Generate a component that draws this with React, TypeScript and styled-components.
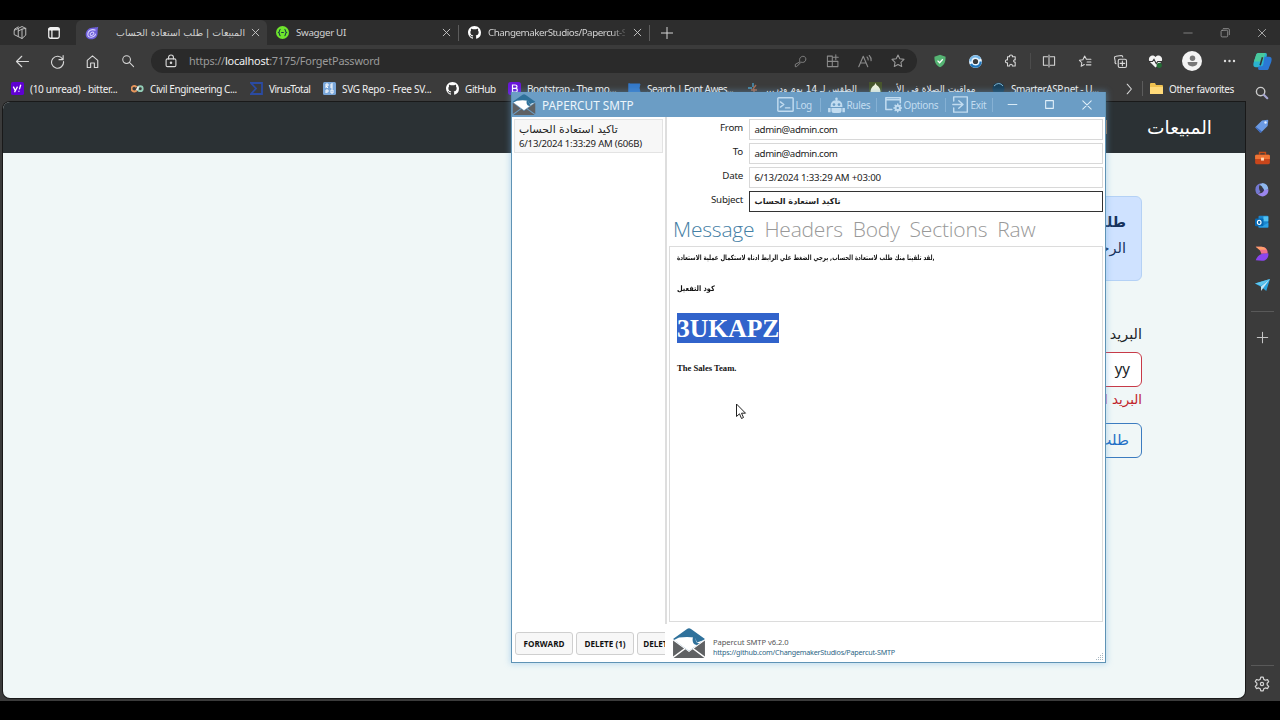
import React from "react";
import styled, { createGlobalStyle } from "styled-components";

const ui = `"Noto Sans", "Open Sans", "DejaVu Sans", sans-serif`;
const arabicUi = `"DejaVu Sans", "Noto Sans", sans-serif`;

const Global = createGlobalStyle`
  * { box-sizing: border-box; }
  html, body { margin: 0; background: #000; overflow: hidden; }
  body { font-family: ${ui}; }
`;

const Screen = styled.div`
  position: relative;
  width: 1280px;
  height: 720px;
  padding: 20px 0 19px;
  background: #000;
  overflow: hidden;
`;
const Browser = styled.div`
  display: flex;
  flex-direction: column;
  height: 681px;
  background: #3b3b3b;
  color: #e6e6e6;
`;
const TabBar = styled.div`
  display: flex;
  align-items: center;
  height: 25px;
  background: #2d2d2d;
  font-size: 10.4px;
`;
const Slot = styled.div<{ $w: number }>`
  display: flex;
  flex: none;
  align-items: center;
  justify-content: center;
  width: ${(p) => p.$w}px;
`;
const Tab = styled.div<{ $w: number; $active?: boolean }>`
  display: flex;
  flex: none;
  align-items: center;
  width: ${(p) => p.$w}px;
  height: 25px;
  padding: 0 6px 0 9px;
  gap: 7px;
  border-radius: 6px 6px 0 0;
  background: ${(p) => (p.$active ? "#3b3b3b" : "transparent")};
`;
const TabTitle = styled.div<{ $fade?: boolean; $rtl?: boolean }>`
  flex: 1;
  height: 16px;
  line-height: 15px;
  overflow: hidden;
  white-space: nowrap;
  font-family: ${(p) => (p.$rtl ? arabicUi : ui)};
  font-size: ${(p) => (p.$rtl ? 9.4 : 9.8)}px;
  letter-spacing: ${(p) => (p.$rtl ? 0 : p.$fade ? -0.47 : -0.33)}px;
  text-align: ${(p) => (p.$rtl ? "right" : "left")};
  margin-right: ${(p) => (p.$rtl ? -2 : 0)}px;
  color: #d2d2d2;
  mask-image: ${(p) => (p.$fade ? "linear-gradient(to right, #000 90%, rgba(0, 0, 0, 0.2))" : "none")};
`;
const Rule = styled.div<{ $h?: number; $c?: string }>`
  flex: none;
  width: 1px;
  height: ${(p) => p.$h ?? 16}px;
  background: ${(p) => p.$c ?? "#5c5c5c"};
`;
const Spacer = styled.div`
  flex: 1;
`;
const Toolbar = styled.div`
  display: flex;
  align-items: center;
  height: 32px;
  padding-left: 4px;
`;
const Address = styled.div`
  display: flex;
  flex: none;
  align-items: center;
  width: 766px;
  height: 24px;
  margin-left: 6px;
  padding: 0 4px 0 11px;
  border-radius: 12px;
  background: #2a2a2a;
  color: #9b9b9b;
  font-size: 10.9px;
  line-height: 16px;
`;
const Url = styled.div`
  flex: 1;
  padding-left: 9px;
  letter-spacing: -0.2px;
  b { color: #f2f2f2; font-weight: 400; }
`;
const Avatar = styled.div`
  display: flex;
  align-items: center;
  justify-content: center;
  width: 20px;
  height: 20px;
  border-radius: 50%;
  background: #f3f3f3;
`;
const Bookmarks = styled.div`
  display: flex;
  align-items: center;
  height: 25px;
  padding: 0 0 2px 11px;
`;
const Bookmark = styled.div<{ $w: number; $ls?: number }>`
  display: flex;
  flex: none;
  align-items: center;
  gap: 6px;
  width: ${(p) => p.$w}px;
  font-size: 10px;
  line-height: 14px;
  letter-spacing: ${(p) => p.$ls ?? -0.4}px;
  white-space: nowrap;
  color: #f0f0f0;
  svg { flex: none; }
`;
const BookmarkArabic = styled.span`
  font-family: ${arabicUi};
  font-size: 9px;
  letter-spacing: 0;
`;
const Lower = styled.div`
  display: flex;
  flex: 1;
  min-height: 0;
`;
const Main = styled.div`
  display: flex;
  flex-direction: column;
  width: 1246px;
  padding-bottom: 3px;
`;
const Page = styled.div`
  flex: 1;
  margin: 0 1px 0 3px;
  overflow: hidden;
  border-radius: 7px 0 7px 7px;
  background: #f0f7f7;
  box-shadow: 0 0 0 1px #191919;
  font-family: ${arabicUi};
  direction: rtl;
`;
const PageHeader = styled.div`
  display: flex;
  align-items: center;
  height: 51px;
  padding-right: 33px;
  background: #2b3134;
  color: #fff;
  font-size: 18.6px;
  line-height: 28px;
  gap: 39px;
`;
const NavLink = styled.span`
  color: #b5b8ba;
`;
const Form = styled.div`
  display: flex;
  flex-direction: column;
  width: 560px;
  margin-right: 103px;
  padding-top: 43px;
  color: #212529;
`;
const Alert = styled.div`
  height: 85px;
  padding: 12px 15px;
  border: 1px solid #b4d1f5;
  border-radius: 6px;
  background: #cfe2ff;
  color: #17325c;
  font-size: 14.5px;
  line-height: 26px;
`;
const AlertTitle = styled.div`
  font-size: 14px;
  font-weight: 700;
`;
const FieldLabel = styled.div`
  margin-top: 42px;
  height: 29px;
  line-height: 22px;
  font-size: 14.4px;
`;
const Input = styled.div`
  height: 35px;
  padding: 0 11px;
  border: 1px solid #c73a48;
  border-radius: 6px;
  background: #fff;
  font: 15px/31px ${ui};
`;
const ErrorText = styled.div`
  height: 36px;
  padding-top: 1px;
  line-height: 24px;
  font-size: 13.4px;
  color: #c01f2c;
`;
const SubmitButton = styled.div`
  width: 110px;
  height: 35px;
  padding: 0 12px;
  border: 1px solid #3c7cc0;
  border-radius: 6px;
  font-size: 15px;
  line-height: 32px;
  color: #1f6fc5;
`;
const Side = styled.div`
  display: flex;
  flex-direction: column;
  align-items: center;
  width: 32px;
`;
const SideItem = styled.div<{ $h?: number }>`
  display: flex;
  flex: none;
  align-items: center;
  justify-content: center;
  height: ${(p) => p.$h ?? 32}px;
`;
const SideRule = styled.div`
  flex: none;
  width: 23px;
  height: 1px;
  background: #595959;
`;

/* Papercut desktop window, floating over the browser */
const Win = styled.div`
  position: absolute;
  left: 511px;
  top: 92px;
  display: flex;
  flex-direction: column;
  width: 595px;
  height: 571px;
  border: 1px solid #5f93b5;
  border-top: 0;
  background: #fff;
  color: #222;
  box-shadow: 0 0 6px 1px rgba(110, 175, 225, 0.4);
`;
const TitleBar = styled.div`
  display: flex;
  flex: none;
  align-items: center;
  height: 25px;
  background: #6b9dc5;
  color: #c2dcf0;
`;
const AppTitle = styled.div`
  flex: 1;
  padding-left: 6px;
  font-size: 11.8px;
  line-height: 18px;
  color: #ecf5fb;
`;
const Command = styled.div<{ $w: number }>`
  display: flex;
  flex: none;
  align-items: center;
  gap: 1.5px;
  width: ${(p) => p.$w}px;
  font-size: 10px;
  line-height: 14px;
  letter-spacing: -0.35px;
  svg { flex: none; }
`;
const Panes = styled.div`
  display: flex;
  flex: 1;
  min-height: 0;
`;
const ListPane = styled.div`
  display: flex;
  flex-direction: column;
  width: 153px;
  padding: 2px 2px 0 2px;
`;
const MailItem = styled.div`
  height: 34px;
  padding: 3px 4px;
  border: 1px solid #e3e3e3;
  background: #f7f7f7;
  font-size: 9.6px;
  line-height: 14px;
  letter-spacing: -0.22px;
  white-space: nowrap;
`;
const MailSubject = styled.div`
  font: 10.9px/14px ${arabicUi};
  letter-spacing: 0;
`;
const ListButtons = styled.div`
  display: flex;
  gap: 3px;
  height: 30px;
  margin: auto -2px 0 1px;
  overflow: hidden;
`;
const PushButton = styled.div`
  display: flex;
  flex: none;
  align-items: center;
  justify-content: center;
  width: 58px;
  height: 23px;
  border: 1px solid #cfcfcf;
  border-radius: 3px;
  background: #f7f7f7;
  font: 700 8.1px/12px "Open Sans", sans-serif;
  color: #111;
  white-space: nowrap;
`;
const Splitter = styled.div`
  width: 2px;
  height: 507px;
  background: #dedede;
`;
const MailPane = styled.div`
  display: flex;
  flex: 1;
  flex-direction: column;
  padding: 2px 2px 0 2px;
`;
const Field = styled.div`
  display: flex;
  height: 24px;
  font-size: 9.8px;
`;
const FieldName = styled.div`
  width: 75px;
  padding-right: 1px;
  line-height: 18px;
  letter-spacing: -0.25px;
  text-align: right;
`;
const FieldValue = styled.div<{ $focus?: boolean; $ls?: number }>`
  flex: 1;
  height: 21px;
  margin-left: 5px;
  padding-left: 4.5px;
  border: 1px solid ${(p) => (p.$focus ? "#333" : "#d8d8d8")};
  font-family: ${(p) => (p.$focus ? arabicUi : ui)};
  font-weight: ${(p) => (p.$focus ? 700 : 400)};
  font-size: ${(p) => (p.$focus ? 8.1 : 9.7)}px;
  letter-spacing: ${(p) => p.$ls ?? 0}px;
  line-height: 19px;
`;
const ViewTabs = styled.div`
  display: flex;
  gap: 10px;
  height: 31px;
  padding-left: 4px;
  font-family: "Open Sans", "Noto Sans", sans-serif;
  font-size: 21px;
  font-weight: 300;
  letter-spacing: -0.2px;
  line-height: 29px;
  color: #999;
`;
const ViewTab = styled.div<{ $on?: boolean }>`
  color: ${(p) => (p.$on ? "#4580a5" : "inherit")};
`;
const Message = styled.div`
  height: 376px;
  padding: 4px 7px;
  border: 1px solid #dcdcdc;
  color: #111;
  font-family: "Liberation Serif", "DejaVu Sans", serif;
`;
const MessageArabic = styled.div<{ $size: number; $gap: number; $squeeze: number }>`
  width: max-content;
  height: 14px;
  margin-bottom: ${(p) => p.$gap}px;
  font: 700 ${(p) => p.$size}px/14px ${arabicUi};
  white-space: nowrap;
  transform: scaleX(${(p) => p.$squeeze});
  transform-origin: left center;
`;
const Code = styled.span`
  display: inline-block;
  height: 30px;
  background: #3163cb;
  color: #fff;
  font-size: 25.6px;
  font-weight: 700;
  line-height: 31px;
`;
const Signature = styled.div`
  margin-top: 18px;
  font-size: 8.6px;
  font-weight: 700;
  line-height: 14px;
`;
const AppFooter = styled.div`
  display: flex;
  gap: 7px;
  padding: 6px 0 0 3px;
`;
const About = styled.div`
  padding-top: 9px;
  font-size: 7.6px;
  line-height: 10px;
  letter-spacing: -0.05px;
  color: #555;
`;
const Link = styled.div`
  font-size: 7.2px;
  letter-spacing: -0.21px;
  color: #2d6685;
`;
const Grip = styled.svg`
  position: absolute;
  right: 1px;
  bottom: 1px;
`;
const Cursor = styled.svg`
  position: absolute;
  left: 735px;
  top: 403px;
`;

type IconProps = { s?: number; c?: string; w?: number; children: React.ReactNode };
const Line = ({ s = 15, c = "#d8d8d8", w = 1.5, children }: IconProps) => (
  <svg width={s} height={s} viewBox="0 0 20 20" fill="none" stroke={c} strokeWidth={w} strokeLinecap="round" strokeLinejoin="round">
    {children}
  </svg>
);
const Close = ({ s = 11, c = "#cfcfcf" }) => (
  <Line s={s} c={c} w={1.6}><path d="M4 4l12 12M16 4L4 16" /></Line>
);
const GitHubMark = ({ s = 13 }) => (
  <svg width={s} height={s} viewBox="0 0 16 16" fill="#fff">
    <path d="M8 0C3.58 0 0 3.58 0 8c0 3.54 2.29 6.53 5.47 7.59.4.07.55-.17.55-.38 0-.19-.01-.82-.01-1.49-2.01.37-2.53-.49-2.69-.94-.09-.23-.48-.94-.82-1.13-.28-.15-.68-.52-.01-.53.63-.01 1.08.58 1.23.82.72 1.21 1.87.87 2.33.66.07-.52.28-.87.51-1.07-1.78-.2-3.64-.89-3.64-3.95 0-.87.31-1.59.82-2.15-.08-.2-.36-1.02.08-2.12 0 0 .67-.21 2.2.82.64-.18 1.32-.27 2-.27s1.36.09 2 .27c1.53-1.04 2.2-.82 2.2-.82.44 1.1.16 1.92.08 2.12.51.56.82 1.27.82 2.15 0 3.07-1.87 3.75-3.65 3.95.29.25.54.73.54 1.48 0 1.07-.01 1.93-.01 2.2 0 .21.15.46.55.38A8.01 8.01 0 0 0 16 8c0-4.42-3.58-8-8-8z" />
  </svg>
);
const Envelope = ({ w }: { w: number }) => (
  <svg width={w} height={w * 0.88} viewBox="0 0 34 30">
    <path d="M1 11L15 1q2-1.500 4 0l14 10-16 12z" fill="#2f719b" />
    <path d="M7 9.500q8-1 16 0l2 5 7-2.500-15 11L2 12z" fill="#fff" />
    <path d="M21 9h3c-1 4 1 7 4 6l-3 2c-4 0-5-4-4-8z" fill="#2f719b" />
    <path d="M1 12.500l11 8L1 28.500zM33 12.500l-11 8 11 8z" fill="#5f6163" />
    <path d="M1.500 30l11.800-8.600 3.700 2.600 3.700-2.600L32.500 30z" fill="#5f6163" />
  </svg>
);

const App = () => (
  <Screen>
    <Global />
    <Browser>
      <TabBar>
        <Slot $w={41}>
          <Line s={15} c="#bdbdbd" w={1.3}><path d="M2 7l5-2.500v11L2 13zM7 4.500L12 2l5 2.500v9L12 18l-5-2.500M7 8l5-2.500 5-1M12 5.500V18M2 7V5.500l5-3" /></Line>
        </Slot>
        <Slot $w={26}>
          <Line s={14} c="#f0f0f0" w={1.8}><rect x="2.5" y="2.5" width="15" height="15" rx="2.5" /><path d="M3.500 4.500h13" strokeWidth="3.500" /><path d="M7 6v11" /></Line>
        </Slot>
        <Slot $w={9} />
        <Tab $w={191} $active>
          <svg width="14" height="14" viewBox="0 0 20 20"><path d="M19 1c-3 1-5 1-7 1C6 2 1 6 1 12c0 4 3 7 8 7 6 0 9-4 9-9 0-3 0-6 1-9z" fill="#6f60dc" /><path d="M15 6C10 4 4 6 4 12c0 3 3 4 5 4 4 0 6-3 6-5" fill="none" stroke="#d9d3ff" strokeWidth="1.500" /><ellipse cx="10" cy="11" rx="3" ry="2" transform="rotate(-35 10 11)" fill="none" stroke="#d9d3ff" strokeWidth="1.400" /></svg>
          <TabTitle $rtl dir="rtl">المبيعات | طلب استعادة الحساب</TabTitle>
          <Close />
        </Tab>
        <Tab $w={191}>
          <svg width="13" height="13" viewBox="0 0 20 20"><circle cx="10" cy="10" r="10" fill="#6fe52c" /><path d="M7 5c-2 0-1 4-3 5 2 1 1 5 3 5M13 5c2 0 1 4 3 5-2 1-1 5-3 5M8 10h4" fill="none" stroke="#173647" strokeWidth="1.6" /></svg>
          <TabTitle>Swagger UI</TabTitle>
          <Close />
        </Tab>
        <Rule />
        <Tab $w={190}>
          <GitHubMark />
          <TabTitle $fade>ChangemakerStudios/Papercut-S</TabTitle>
          <Close />
        </Tab>
        <Rule />
        <Slot $w={34}><Line s={14} w={1.4}><path d="M10 2v16M2 10h16" /></Line></Slot>
        <Spacer />
        <Slot $w={38}><Line s={12} c="#888"><path d="M3 10h14" /></Line></Slot>
        <Slot $w={36}><Line s={11} c="#999"><rect x="2" y="6" width="12" height="12" rx="2" /><path d="M6 3h9q2 0 2 2v9" /></Line></Slot>
        <Slot $w={37}><Close s={12} c="#aaa" /></Slot>
      </TabBar>

      <Toolbar>
        <Slot $w={36}><Line><path d="M18 10H2M9 3l-7 7 7 7" /></Line></Slot>
        <Slot $w={35}><Line><path d="M17 7A8 8 0 1 0 18 10M17.500 2v5.500h-5.500" /></Line></Slot>
        <Slot $w={35}><Line><path d="M3 8.500l7-6 7 6V18h-4.500v-6h-5v6H3z" /></Line></Slot>
        <Slot $w={35}><Line s={14}><circle cx="8" cy="8" r="5.500" /><path d="M12 12l6 6" /></Line></Slot>
        <Address>
          <Slot $w={18}><Line s={14} w={1.6}><rect x="3" y="7" width="14" height="11" rx="2" /><path d="M6.500 7V5a3.500 3.500 0 0 1 7 0v2" /><circle cx="10" cy="12.500" r="1" fill="#d8d8d8" /></Line></Slot>
          <Url>https://<b>localhost</b>:7175/ForgetPassword</Url>
          <Slot $w={33}><Line s={13} c="#858585"><path d="M9 10c-2-5 2-8 5-8s5 3 4 6-4 4-7 3l-7 7H2v-3z" /></Line></Slot>
          <Slot $w={32}><Line s={14} c="#8b8b8b"><path d="M2 3h7v15H2zM2 10.500h15V18H9M14 1v7M10.500 4.500h7" /></Line></Slot>
          <Slot $w={33}><Line s={15} c="#8b8b8b"><path d="M1 17L7 3l6 14M3 12h8M12 4q2 2 1.500 4M15 2q3 3 2.500 7" /></Line></Slot>
          <Slot $w={31}><Line s={14} c="#9b9b9b"><path d="M10 1.500l2.600 5.400 6 .8-4.400 4.200 1.100 6L10 15l-5.300 2.900 1.100-6L1.400 7.700l6-.8z" /></Line></Slot>
        </Address>
        <Slot $w={46}><svg width="14" height="14" viewBox="0 0 20 20"><path d="M10 1l8 3c0 8-2 12-8 15C4 16 2 12 2 4z" fill="#55b473" /><path d="M6.500 9.500l3 3 4.500-5" fill="none" stroke="#fff" strokeWidth="1.800" /></svg></Slot>
        <Slot $w={24}><svg width="13" height="13" viewBox="0 0 20 20"><circle cx="10" cy="10" r="7" fill="none" stroke="#e7f4ff" strokeWidth="6" /><path d="M2 10a8 8 0 0 1 8-8q5 0 7 4" fill="none" stroke="#77b8e8" strokeWidth="3.500" /><path d="M18 10a8 8 0 0 1-8 8q-5 0-7-4" fill="none" stroke="#2077bd" strokeWidth="3.500" /></svg></Slot>
        <Slot $w={12} />
        <Slot $w={24}><Line s={14}><path d="M5 4h3c-1-3.500 5-3.500 4 0h4v4.500c-3-1-3 4 0 3V17h-4c0-3-4-3-4 0H5v-4.500c-4 1-4-5 0-4z" /></Line></Slot>
        <Slot $w={7} />
        <Rule $c="#4c4c4c" />
        <Slot $w={36}><Line s={14}><path d="M8 4H2v12h6M12 4h6v12h-6M10 1.500v17" /></Line></Slot>
        <Slot $w={36}><Line s={14}><path d="M9 15l-4.500 2.500 1-5L2 9l5-.8L9.500 3l2.500 4.500h6.500M13 11.500h5.500M12 15.500h6.500" /></Line></Slot>
        <Slot $w={35}><Line s={15}><rect x="7" y="7" width="11" height="11" rx="2" /><path d="M12.500 9.500v6M9.500 12.500h6M4 13q-2-1-1-3L2 5q0-2 2-2l7-1q2 0 2 2" /></Line></Slot>
        <Slot $w={34}><svg width="15" height="15" viewBox="0 0 20 20"><path d="M10 18L2 10C-1 5 5-1 10 4c5-5 11 1 8 6z" fill="#f3f3f3" /><path d="M1 10h5l2-3 3 6 2-3h6" fill="none" stroke="#333" strokeWidth="1.500" /><circle cx="15" cy="15" r="3.500" fill="#256c36" /></svg></Slot>
        <Slot $w={40}><Avatar><svg width="11" height="12" viewBox="0 0 10 11"><circle cx="5" cy="3" r="2.500" fill="#777" /><path d="M.5 6.500h9q0 4-4.500 4t-4.500-4z" fill="#777" /></svg></Avatar></Slot>
        <Slot $w={34}><svg width="13" height="4" viewBox="0 0 13 4" fill="#ddd"><circle cx="2" cy="2" r="1.200" /><circle cx="6.500" cy="2" r="1.200" /><circle cx="11" cy="2" r="1.200" /></svg></Slot>
        <Slot $w={32}><svg width="19" height="19" viewBox="0 0 20 20"><path d="M6 1h7c2 0 2 2 1 5l-2 7c-.5 2-2 3-4 3H3c-3 0-3-3-2-6l2-6c.5-2 1-3 3-3z" fill="#2ab3d0" /><path d="M3 4c.5-2 1-3 3-3h7l-3 9H1z" fill="#49c99b" /><path d="M12 5h5c3 0 3 3 2 6l-2 5c-.5 2-1 3-3 3H7c-2 0-2-2-1-4h2c2 0 2.500-1 3-3z" fill="#2b78d4" /><path d="M10 5.500L7.500 14" stroke="#333" strokeWidth="1.600" /></svg></Slot>
      </Toolbar>

      <Lower>
        <Main>
          <Bookmarks>
            <Bookmark $w={120} $ls={-0.3}><svg width="13" height="13" viewBox="0 0 14 14"><rect width="14" height="14" rx="2" fill="#5f01d1" /><path d="M2.500 5l2 4M7 5l-3.200 6M10.500 3L9 8M8.500 9.500v1" stroke="#fff" strokeWidth="1.400" /></svg>(10 unread) - bitter...</Bookmark>
            <Bookmark $w={119}><svg width="13" height="13" viewBox="0 0 14 14" fill="none" strokeWidth="2"><path d="M6 5.500A3 3 0 1 0 6 9" stroke="#e6955b" /><circle cx="10" cy="7.200" r="2.600" stroke="#93cdb6" /><path d="M6 9l2-4" stroke="#eee" /></svg>Civil Engineering C...</Bookmark>
            <Bookmark $w={73} $ls={-0.5}><svg width="13" height="13" viewBox="0 0 13 13"><path d="M1 1h11v11H1l5-5.500z" fill="none" stroke="#2b4ba3" strokeWidth="1.800" /></svg>VirusTotal</Bookmark>
            <Bookmark $w={123} $ls={-0.3}><svg width="13" height="13" viewBox="0 0 13 13"><rect width="13" height="13" rx="1.500" fill="#7aa7da" /><path d="M3 6V2h2v2H3l2 2M8 2h2M8 4h2M8 6h2M8 2v4M3 11V8h2v2H3M8 8h2v3H8z" fill="none" stroke="#fff" strokeWidth="1" /></svg>SVG Repo - Free SV...</Bookmark>
            <Bookmark $w={62} $ls={-0.4}><GitHubMark />GitHub</Bookmark>
            <Bookmark $w={120} $ls={-0.4}><svg width="13" height="13" viewBox="0 0 13 13"><rect width="13" height="13" rx="2.500" fill="#6917d8" /><path d="M4.500 3h2.500q2 0 2 1.700T7 6.400H4.500zM4.500 6.400H7.300q2 0 2 1.800T7.300 10H4.500z" fill="none" stroke="#fff" strokeWidth="1.200" /></svg>Bootstrap · The mo...</Bookmark>
            <Bookmark $w={119} $ls={-0.6}><svg width="13" height="13" viewBox="0 0 13 13"><path d="M1 1v12M1 2h11l-1 4 1 4H1z" fill="#3579c8" stroke="#3579c8" /></svg>Search | Font Awes...</Bookmark>
            <Bookmark $w={122}><svg width="13" height="13" viewBox="0 0 13 13" fill="none" strokeWidth="1.400"><path d="M6 1v4M1 6h4" stroke="#4c9bc1" /><path d="M9 3L6 7M10 8H4M7 11V7" stroke="#a46a50" /></svg><BookmarkArabic dir="rtl">الطقس لـ 14 يوم ودر...</BookmarkArabic></Bookmark>
            <Bookmark $w={123}><svg width="13" height="13" viewBox="0 0 13 13"><rect width="13" height="13" fill="#48552c" /><path d="M6.500 1l1 2c3 2 4 4 4 7h-10c0-3 1-5 4-7z" fill="#f1f3dd" /></svg><BookmarkArabic dir="rtl">مواقيت الصلاة في الأ...</BookmarkArabic></Bookmark>
            <Bookmark $w={130} $ls={-0.4}><svg width="13" height="13" viewBox="0 0 13 13"><circle cx="6.500" cy="6.500" r="6" fill="#173e58" /><path d="M2 4Q7-1 11 4" stroke="#81b5d1" fill="none" /></svg>SmarterASP.net - U...</Bookmark>
            <Slot $w={13}><Line s={12} w={1.800}><path d="M7 2l7 8-7 8" /></Line></Slot>
            <Slot $w={15}><Rule $h={15} /></Slot>
            <Bookmark $w={90} $ls={-0.4}><svg width="13" height="13" viewBox="0 0 13 13"><path d="M0 2q0-1 1-1h4l1 2h6q1 0 1 1v8H0z" fill="#efc150" /><path d="M0 5h13v7H0z" fill="#ffda79" /></svg>Other favorites</Bookmark>
          </Bookmarks>
          <Page>
            <PageHeader><span>المبيعات</span><NavLink>الرئيسية</NavLink></PageHeader>
            <Form>
              <Alert>
                <AlertTitle>طلب استعادة الحساب</AlertTitle>
                الرجاء ادخال البريد الالكتروني
              </Alert>
              <FieldLabel>البريد الالكتروني</FieldLabel>
              <Input>yy</Input>
              <ErrorText>البريد الالكتروني غير صحيح</ErrorText>
              <SubmitButton>طلب استعادة</SubmitButton>
            </Form>
          </Page>
        </Main>
        <Side>
          <SideItem><Line s={14} c="#c9c9c9" w={2}><circle cx="8" cy="8" r="6" /><path d="M12.500 12.500l5 5" stroke="#a6a5d0" strokeWidth="3" /></Line></SideItem>
          <SideItem $h={33}><svg width="14" height="14" viewBox="0 0 20 20"><path d="M10 2l8-1 1 1-1 8-9 9q-2 1-3-1l-5-5q-1-1 0-2z" fill="#6b9ae3" /><path d="M1 11l9 7-1 1q-2 1-3-1l-5-5z" fill="#3d68bb" /><circle cx="15" cy="5" r="1.700" fill="#e0ecff" /></svg></SideItem>
          <SideItem><svg width="15" height="14" viewBox="0 0 20 19"><path d="M6 5V2h8v3" fill="none" stroke="#c34b17" strokeWidth="2" /><rect y="5" width="20" height="13" rx="2" fill="#c9461b" /><path d="M0 7q0-2 2-2h16q2 0 2 2v4H0z" fill="#ee7434" /><rect x="8" y="9" width="4" height="4" fill="#ffd5b3" /></svg></SideItem>
          <SideItem><svg width="14" height="14" viewBox="0 0 20 20"><path d="M6 2l5-2c5 1 8 4 8 9l-6 2-3-6z" fill="#8eb6ed" /><path d="M11 0C4 2 5 9 8 13l-5 3C-1 11 0 3 6 1z" fill="#7378d2" /><path d="M19 9c1 6-4 11-10 10q-4-1-6-4 8 1 10-5z" fill="#9b86ee" /><circle cx="10" cy="9.500" r="2.500" fill="#34355a" /></svg></SideItem>
          <SideItem><svg width="14" height="14" viewBox="0 0 20 20"><rect x="5" y="1" width="14" height="17" rx="1.500" fill="#1a86ce" /><path d="M12 2h7v7h-7z" fill="#51c1f2" /><path d="M5 11l7 4 7-4v7H5z" fill="#2ba1e6" /><rect y="5" width="12" height="11" rx="1.500" fill="#0768b2" /><ellipse cx="6" cy="10.500" rx="2.600" ry="3" fill="none" stroke="#fff" strokeWidth="1.600" /></svg></SideItem>
          <SideItem $h={31}><svg width="14" height="15" viewBox="0 0 20 21"><path d="M1 1h8c6 0 10 4 9 10H9C8 6 5 3 1 1z" fill="#ef6e8b" /><path d="M1 1h8c4 0 6 2 7 4H6z" fill="#ff9e6b" /><path d="M1 20c3-8 8-10 18-10 1 6-3 11-9 11z" fill="#8b45ee" /></svg></SideItem>
          <SideItem><svg width="15" height="14" viewBox="0 0 20 18"><path d="M0 7L20 1l-5 16-6-5z" fill="#27a1dc" /><path d="M20 1L8 11v6l3-4z" fill="#bfe4f4" /><path d="M0 7l20-6L8 10z" fill="#5fc6ee" /></svg></SideItem>
          <SideItem $h={10} />
          <SideRule />
          <SideItem $h={50}><Line s={13} c="#c5c5c5" w={1.600}><path d="M10 2v16M2 10h16" /></Line></SideItem>
          <Spacer />
          <SideRule />
          <SideItem $h={35}><Line s={16} c="#d5d5d5" w={1.500}><path d="M8.500 1.500h3l.7 2.700 2 1.100 2.700-.8 1.500 2.600-2 2v2l2 2-1.500 2.600-2.700-.8-2 1.100-.7 2.700h-3l-.7-2.700-2-1.100-2.700.8-1.500-2.600 2-2V9l-2-2 1.500-2.600 2.700.8 2-1.100z" /><circle cx="10" cy="10" r="2" /></Line></SideItem>
        </Side>
      </Lower>
    </Browser>

    <Win>
      <TitleBar>
        <Slot $w={24}><Envelope w={24} /></Slot>
        <AppTitle>PAPERCUT SMTP</AppTitle>
        <Command $w={35}><Line s={17} c="#c2dcf0" w={1.700}><rect x="1" y="2" width="18" height="16" rx="1" /><path d="M4 7l4 3-4 3M10 14h5" /></Line>Log</Command>
        <Slot $w={16}><Rule $h={14} $c="#86b1d4" /></Slot>
        <Command $w={39}><svg width="17" height="16" viewBox="0 0 20 19" fill="#c2dcf0"><circle cx="10" cy="2" r="1.500" /><path d="M9 2h2v3H9zM3 11q0-7 7-7t7 7v1H3zM0 13h3v5H0zM17 13h3v5h-3zM4 13h12v3q0 3-3 3H7q-3 0-3-3z" /><circle cx="7" cy="9" r="1.600" fill="#6b9dc5" /><circle cx="13" cy="9" r="1.600" fill="#6b9dc5" /></svg>Rules</Command>
        <Slot $w={18}><Rule $h={14} $c="#86b1d4" /></Slot>
        <Command $w={53}><Line s={17} c="#c2dcf0" w={1.800}><path d="M8 16H1V2h17v6M1 4.500h17" /><circle cx="15" cy="14" r="2.600" strokeWidth="2.400" /><path d="M15 9.500v1M15 17.500v1M10.500 14h1M18.500 14h1M12 11l.5.5M17.500 16.500l.5.500M18 11l-.5.5M12.500 16.500l-.5.500" /></Line>Options</Command>
        <Slot $w={14}><Rule $h={14} $c="#86b1d4" /></Slot>
        <Command $w={39}><Line s={17} c="#c2dcf0" w={1.700}><path d="M2 6V1h16v18H2v-5M1 10h11M8 5.500l5 4.500-5 4.500" /></Line>Exit</Command>
        <Slot $w={3}><Rule $h={14} $c="#86b1d4" /></Slot>
        <Slot $w={37}><Line s={11} c="#e0eff9" w={1.700}><path d="M2 10h16" /></Line></Slot>
        <Slot $w={37}><Line s={11} c="#e0eff9" w={2}><rect x="3" y="3" width="14" height="14" /></Line></Slot>
        <Slot $w={37}><Line s={12} c="#e0eff9" w={1.700}><path d="M3 3l14 14M17 3L3 17" /></Line></Slot>
      </TitleBar>
      <Panes>
        <ListPane>
          <MailItem>
            <MailSubject>تاكيد استعادة الحساب</MailSubject>
            6/13/2024 1:33:29 AM (606B)
          </MailItem>
          <ListButtons>
            <PushButton>FORWARD</PushButton>
            <PushButton>DELETE (1)</PushButton>
            <PushButton>DELETE ALL</PushButton>
          </ListButtons>
        </ListPane>
        <Splitter />
        <MailPane>
          <Field><FieldName>From</FieldName><FieldValue $ls={-0.38}>admin@admin.com</FieldValue></Field>
          <Field><FieldName>To</FieldName><FieldValue $ls={-0.38}>admin@admin.com</FieldValue></Field>
          <Field><FieldName>Date</FieldName><FieldValue $ls={-0.2}>6/13/2024 1:33:29 AM +03:00</FieldValue></Field>
          <Field><FieldName>Subject</FieldName><FieldValue $focus>تاكيد استعادة الحساب</FieldValue></Field>
          <ViewTabs>
            <ViewTab $on>Message</ViewTab>
            <ViewTab>Headers</ViewTab>
            <ViewTab>Body</ViewTab>
            <ViewTab>Sections</ViewTab>
            <ViewTab>Raw</ViewTab>
          </ViewTabs>
          <Message>
            <MessageArabic $size={7.2} $gap={17} $squeeze={0.755}>‪لقد تلقينا منك طلب لاستعادة الحساب, يرجي الضغط علي الرابط ادناه لاستكمال عملية الاستعادة,‬</MessageArabic>
            <MessageArabic $size={7.6} $gap={17} $squeeze={0.86}>كود التفعيل</MessageArabic>
            <Code>3UKAPZ</Code>
            <Signature>The Sales Team.</Signature>
          </Message>
          <AppFooter>
            <Envelope w={34} />
            <About>Papercut SMTP v6.2.0<Link>https://github.com/ChangemakerStudios/Papercut-SMTP</Link></About>
          </AppFooter>
        </MailPane>
      </Panes>
      <Grip width="9" height="9" viewBox="0 0 9 9" fill="#a9b8c2">
        <path d="M7 1h1v1H7zM5 3h1v1H5zM7 3h1v1H7zM3 5h1v1H3zM5 5h1v1H5zM7 5h1v1H7zM1 7h1v1H1zM3 7h1v1H3zM5 7h1v1H5zM7 7h1v1H7z" />
      </Grip>
    </Win>
    <Cursor width="12" height="17" viewBox="0 0 12 17">
      <path d="M1.500 1v12.500l3-2.700 2 4.700 2-1-2-4.300h4z" fill="#fff" stroke="#222" strokeWidth="1" />
    </Cursor>
  </Screen>
);

export default App;
